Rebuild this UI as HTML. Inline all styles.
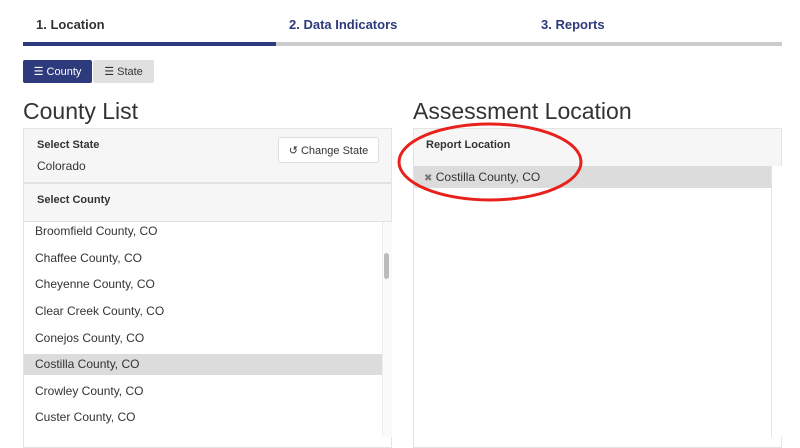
<!DOCTYPE html>
<html><head><style>
*{box-sizing:border-box;margin:0;padding:0}
body{width:800px;height:437px;overflow:hidden;background:#fff;font-family:"Liberation Sans",sans-serif;color:#333;position:relative}
.a{position:absolute}
.tab{font-size:13px;font-weight:bold;top:17px;color:#2d3a7c}
.btn{font-size:11px;height:23px;top:60px;border-radius:2px;display:flex;align-items:center;justify-content:center}
h2{position:absolute;font-weight:normal;font-size:23px;color:#333;top:98px}
.row{position:absolute;left:35px;font-size:12px;color:#333}
</style></head><body>
<div class="a tab" style="left:36px;color:#333">1. Location</div>
<div class="a tab" style="left:289px">2. Data Indicators</div>
<div class="a tab" style="left:541px">3. Reports</div>
<div class="a" style="left:23px;top:42px;width:759px;height:4px;background:#ccc"></div>
<div class="a" style="left:23px;top:42px;width:253px;height:4px;background:#2d3a7c"></div>
<div class="a btn" style="left:23px;width:69px;background:#2d3a7c;color:#fff">☰&nbsp;County</div>
<div class="a btn" style="left:93px;width:61px;background:#e0e0e0;color:#333">☰&nbsp;State</div>
<h2 style="left:23px">County List</h2>
<h2 style="left:413px">Assessment Location</h2>
<!-- left panel -->
<div class="a" style="left:23px;top:128px;width:369px;height:320px;border:1px solid #e4e4e4;background:#fff"></div>
<div class="a" style="left:24px;top:129px;width:367px;height:92px;background:#f6f6f7"></div>
<div class="a" style="left:24px;top:182px;width:367px;height:2px;background:#e2e2e2"></div>
<div class="a" style="left:24px;top:221px;width:367px;height:1px;background:#e2e2e2"></div>
<div class="a" style="left:37px;top:139px;font-size:11px;font-weight:bold">Select State</div>
<div class="a" style="left:37px;top:159px;font-size:12px">Colorado</div>
<div class="a" style="left:37px;top:194px;font-size:11px;font-weight:bold">Select County</div>
<div class="a" style="left:278px;top:137px;width:101px;height:26px;border:1px solid #ddd;border-radius:3px;background:#fff;font-size:11px;display:flex;align-items:center;justify-content:center">↺ Change State</div>
<div class="a" style="left:382px;top:222px;width:10px;height:215px;background:#fafafa;border-left:1px solid #eee"></div>
<div class="a" style="left:384px;top:253px;width:5px;height:26px;background:#bbb;border-radius:3px"></div>
<div class="a" style="left:24px;top:354px;width:358px;height:21px;background:#dcdcdc"></div>
<div class="row" style="top:224px">Broomfield County, CO</div>
<div class="row" style="top:251px">Chaffee County, CO</div>
<div class="row" style="top:277px">Cheyenne County, CO</div>
<div class="row" style="top:304px">Clear Creek County, CO</div>
<div class="row" style="top:331px">Conejos County, CO</div>
<div class="row" style="top:357px">Costilla County, CO</div>
<div class="row" style="top:384px">Crowley County, CO</div>
<div class="row" style="top:410px">Custer County, CO</div>
<!-- right panel -->
<div class="a" style="left:413px;top:128px;width:369px;height:320px;border:1px solid #e4e4e4;background:#fff"></div>
<div class="a" style="left:414px;top:129px;width:367px;height:37px;background:#f6f6f7"></div>
<div class="a" style="left:771px;top:166px;width:11px;height:271px;border-left:1px solid #e4e4e4;background:#fff"></div>
<div class="a" style="left:426px;top:139px;font-size:11px;font-weight:bold">Report Location</div>
<div class="a" style="left:414px;top:166px;width:357px;height:22px;background:#dcdcdc"></div>
<div class="a" style="left:424px;top:170px;font-size:12px"><span style="color:#777;font-size:10px">✖</span> Costilla County, CO</div>
<svg class="a" style="left:395px;top:118px" width="200" height="90"><ellipse cx="95" cy="44" rx="91" ry="38" fill="none" stroke="#e8211c" stroke-width="3"/></svg>
</body></html>
